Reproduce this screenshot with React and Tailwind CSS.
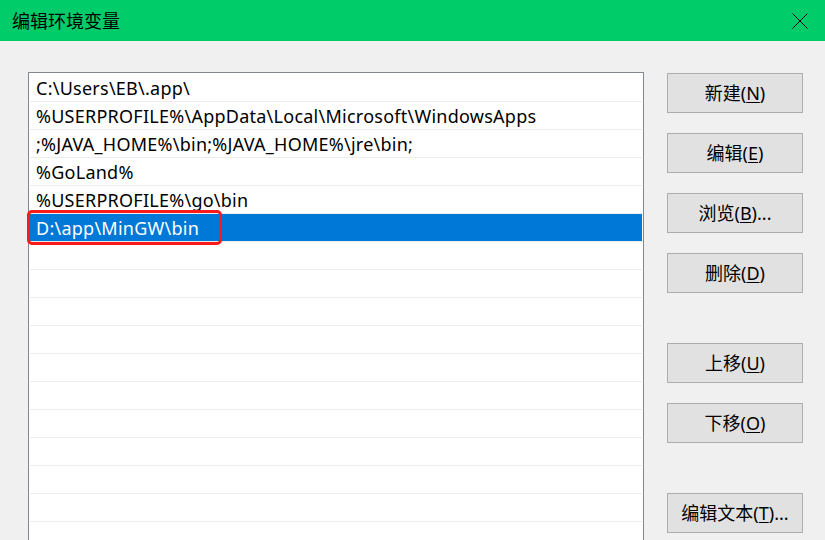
import React from "react";

const rows = [
  "C:\\Users\\EB\\.app\\",
  "%USERPROFILE%\\AppData\\Local\\Microsoft\\WindowsApps",
  ";%JAVA_HOME%\\bin;%JAVA_HOME%\\jre\\bin;",
  "%GoLand%",
  "%USERPROFILE%\\go\\bin",
  "D:\\app\\MinGW\\bin",
];

function Btn({ pre, k, post = "" }) {
  return (
    <button className="w-[136px] h-[40px] bg-[#e1e1e1] border border-[#adadad] text-[18px] text-black flex items-center justify-center leading-none">
      <span>
        {pre}(<span className="underline underline-offset-2">{k}</span>){post}
      </span>
    </button>
  );
}

export default function App() {
  const total = 17;
  return (
    <div
      className="w-[825px] h-[540px] bg-[#f0f0f0] overflow-hidden flex flex-col"
      style={{ fontFamily: '"Noto Sans", "Noto Sans CJK SC", sans-serif' }}
    >
      <div className="h-[41px] shrink-0 bg-[#00cc6a] flex items-center justify-between pl-[12px] pr-[17px]">
        <span className="text-[18px] text-black" style={{ fontFamily: '"Noto Sans CJK SC", sans-serif' }}>
          编辑环境变量
        </span>
        <svg width="16" height="16" viewBox="0 0 16 16">
          <path d="M0.5 0.5 L15.5 15.5 M15.5 0.5 L0.5 15.5" stroke="#000" strokeWidth="1" fill="none" />
        </svg>
      </div>
      <div className="flex pl-[28px] pt-[31px] gap-[23px]">
        <div className="relative w-[616px] h-[480px] bg-white border border-[#828790] pt-px px-px">
          {Array.from({ length: total }).map((_, i) => {
            const text = rows[i];
            const sel = i === 5;
            return (
              <div
                key={i}
                className={`h-[28px] border-b border-[#ececec] flex items-center pl-[6px] text-[18px] tracking-[0.25px] whitespace-nowrap ${
                  sel ? "bg-[#0078d7] text-white" : "text-black"
                }`}
              >
                <span className="leading-none">{text || "\u00a0"}</span>
              </div>
            );
          })}
          <div className="absolute left-[-2px] top-[137px] w-[195px] h-[35px] border-[3px] border-[#ff1a1a] rounded-[5px]" />
        </div>
        <div className="flex flex-col pt-px">
          <Btn pre="新建" k="N" />
          <div className="h-[20px]" />
          <Btn pre="编辑" k="E" />
          <div className="h-[20px]" />
          <Btn pre="浏览" k="B" post="..." />
          <div className="h-[20px]" />
          <Btn pre="删除" k="D" />
          <div className="h-[50px]" />
          <Btn pre="上移" k="U" />
          <div className="h-[20px]" />
          <Btn pre="下移" k="O" />
          <div className="h-[50px]" />
          <Btn pre="编辑文本" k="T" post="..." />
        </div>
      </div>
    </div>
  );
}
